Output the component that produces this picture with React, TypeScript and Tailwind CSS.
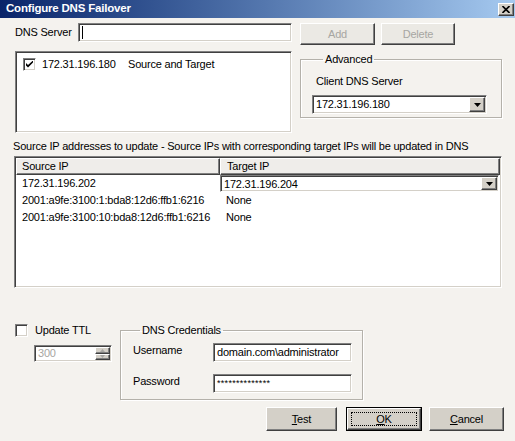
import type { ReactNode } from 'react'

// classic 3D bevels
const sunken =
  'bg-white border border-[#808080] border-b-white border-r-white shadow-[inset_1px_1px_0_#404040,inset_-1px_-1px_0_#d4d0c8]'
const raised =
  'border border-white border-b-[#404040] border-r-[#404040] shadow-[inset_-1px_-1px_0_#808080]'

function Check({ checked }: { checked?: boolean }) {
  return (
    <div className={`${sunken} w-[13px] h-[13px] flex items-center justify-center shrink-0`}>
      {checked && (
        <svg width="7" height="7" viewBox="0 0 7 7">
          <path d="M0 2 L0 4.5 L2 6.5 L7 1.5 L7 -0.5 L2 4 Z" fill="#000" />
        </svg>
      )}
    </div>
  )
}

function DropArrow({ className }: { className?: string }) {
  return (
    <div
      className={`${raised} bg-[#d4d0c8] w-[16px] flex items-center justify-center shrink-0 ${className ?? ''}`}
    >
      <svg width="7" height="4" viewBox="0 0 7 4">
        <path d="M0 0 H7 L3.5 4 Z" fill="#000" />
      </svg>
    </div>
  )
}

function Combo({ value, className }: { value: string; className?: string }) {
  return (
    <div className={`${sunken} flex items-stretch p-[1px] pl-[3px] ${className ?? ''}`}>
      <span className="flex-1 leading-[15px]">{value}</span>
      <DropArrow />
    </div>
  )
}

function Button({
  children,
  disabled,
  focused,
  className
}: {
  children: ReactNode
  disabled?: boolean
  focused?: boolean
  className?: string
}) {
  if (focused) {
    return (
      <button className={`border border-black bg-[#d4d0c8] p-0 ${className ?? ''}`}>
        <div className={`${raised} h-full flex items-center justify-center p-[3px]`}>
          <div className="w-full h-full border border-dotted border-black flex items-center justify-center">
            {children}
          </div>
        </div>
      </button>
    )
  }
  return (
    <button
      className={`${raised} flex items-center justify-center ${
        disabled ? 'bg-[#ebe9e4] text-[#a7a6a2]' : 'bg-[#d4d0c8] text-black'
      } ${className ?? ''}`}
    >
      {children}
    </button>
  )
}

function Group({
  title,
  className,
  children
}: {
  title: string
  className?: string
  children: ReactNode
}) {
  return (
    <fieldset className={`border border-[#b4b1aa] shadow-[1px_1px_0_#fff,inset_1px_1px_0_#fff] ${className ?? ''}`}>
      <legend className="ml-[7px] px-[2px] leading-[13px]">{title}</legend>
      {children}
    </fieldset>
  )
}

const rows = [
  { source: '172.31.196.202', target: '172.31.196.204', combo: true },
  { source: '2001:a9fe:3100:1:bda8:12d6:ffb1:6216', target: 'None' },
  { source: '2001:a9fe:3100:10:bda8:12d6:ffb1:6216', target: 'None' }
]

export default function App() {
  return (
    <div className="w-[515px] h-[441px] overflow-hidden bg-[#f4f2ee] text-[11px] tracking-[-0.2px] text-black font-['Liberation_Sans',Arial,sans-serif] flex flex-col">
      {/* title bar */}
      <div className="h-[18px] shrink-0 bg-gradient-to-r from-[#0a246a] to-[#a6caf0] flex items-center justify-between pl-[6px] pr-[1px]">
        <span className="text-white font-bold text-[11.5px]">Configure DNS Failover</span>
        <div className={`${raised} bg-[#d4d0c8] w-[16px] h-[13px] flex items-center justify-center`}>
          <svg width="8" height="7" viewBox="0 0 8 7">
            <path d="M0.5 0 L7.5 7 M7.5 0 L0.5 7" stroke="#000" strokeWidth="1.6" />
          </svg>
        </div>
      </div>

      {/* server list + advanced */}
      <div className="flex mt-[5px] pl-[15px]">
        <div className="w-[277px]">
          <div className="flex items-center h-[19px]">
            <span className="w-[63px]">DNS Server</span>
            <div className={`${sunken} flex-1 h-[19px] flex items-center pl-[3px]`}>
              <div className="w-px h-[13px] bg-black" />
            </div>
          </div>
          <div className={`${sunken} h-[82px] mt-[9px] pt-[4px] pl-[7px]`}>
            <div className="flex items-center gap-[6px]">
              <Check checked />
              <span className="w-[80px]">172.31.196.180</span>
              <span>Source and Target</span>
            </div>
          </div>
        </div>

        <div className="ml-[8px] w-[202px]">
          <div className="flex gap-[6px] h-[22px]">
            <Button disabled className="w-[75px]">
              Add
            </Button>
            <Button disabled className="w-[74px]">
              Delete
            </Button>
          </div>
          <Group title="Advanced" className="mt-[8px] h-[65px] pl-[15px] pr-[14px]">
            <div className="mt-[9px] leading-[13px]">Client DNS Server</div>
            <Combo value="172.31.196.180" className="-ml-[4px] mt-[7px] h-[19px]" />
          </Group>
        </div>
      </div>

      <div className="mt-[7px] pl-[13px] leading-[13px]">
        Source IP addresses to update - Source IPs with corresponding target IPs will be updated in DNS
      </div>

      {/* source / target list view */}
      <div className={`${sunken} ml-[14px] w-[488px] h-[132px] mt-[3px] p-[1px]`}>
        <div className="flex h-[17px] leading-[15px]">
          <div className={`${raised} bg-[#efedea] w-[204px] pl-[5px]`}>Source IP</div>
          <div className={`${raised} bg-[#efedea] flex-1 pl-[6px]`}>Target IP</div>
        </div>
        {rows.map((r) => (
          <div key={r.source} className="flex h-[17px] items-center">
            <div className="w-[204px] pl-[6px]">{r.source}</div>
            {r.combo ? (
              <Combo value={r.target} className="flex-1 h-[17px] mr-[1px]" />
            ) : (
              <div className="pl-[6px]">{r.target}</div>
            )}
          </div>
        ))}
      </div>

      {/* ttl + credentials */}
      <div className="flex mt-[36px] pl-[15px]">
        <div className="w-[105px]">
          <div className="flex items-center gap-[7px] h-[13px]">
            <Check />
            <span>Update TTL</span>
          </div>
          <div className={`${sunken} ml-[19px] mt-[8px] w-[78px] h-[17px] flex items-stretch bg-[#f4f2ee] p-[1px] pl-[3px]`}>
            <span className="flex-1 text-[#a7a6a2] leading-[13px]">300</span>
            <div className="flex flex-col w-[15px]">
              <div className={`${raised} bg-[#d4d0c8] flex-1 flex items-center justify-center`}>
                <svg width="5" height="3" viewBox="0 0 5 3">
                  <path d="M0 3 H5 L2.5 0 Z" fill="#a7a6a2" />
                </svg>
              </div>
              <div className={`${raised} bg-[#d4d0c8] flex-1 flex items-center justify-center`}>
                <svg width="5" height="3" viewBox="0 0 5 3">
                  <path d="M0 0 H5 L2.5 3 Z" fill="#a7a6a2" />
                </svg>
              </div>
            </div>
          </div>
        </div>

        <Group title="DNS Credentials" className="w-[243px] h-[76px] pl-[12px]">
          <div className="flex items-start mt-[6px]">
            <span className="w-[80px] leading-[13px] mt-[1px]">Username</span>
            <div className={`${sunken} w-[139px] h-[19px] flex items-center pl-[3px]`}>
              domain.com\administrator
            </div>
          </div>
          <div className="flex items-start mt-[12px]">
            <span className="w-[80px] leading-[13px] mt-[1px]">Password</span>
            <div className={`${sunken} w-[139px] h-[19px] flex items-center pl-[3px] text-[9px] tracking-[0.3px]`}>
              **************
            </div>
          </div>
        </Group>
      </div>

      <div className="flex mt-[7px] ml-[266px] h-[24px]">
        <Button className="w-[71px]">
          <span>
            <span className="underline">T</span>est
          </span>
        </Button>
        <Button focused className="w-[76px] ml-[9px]">
          <span>
            <span className="underline">O</span>K
          </span>
        </Button>
        <Button className="w-[75px] ml-[7px]">
          <span>
            <span className="underline">C</span>ancel
          </span>
        </Button>
      </div>
    </div>
  )
}
